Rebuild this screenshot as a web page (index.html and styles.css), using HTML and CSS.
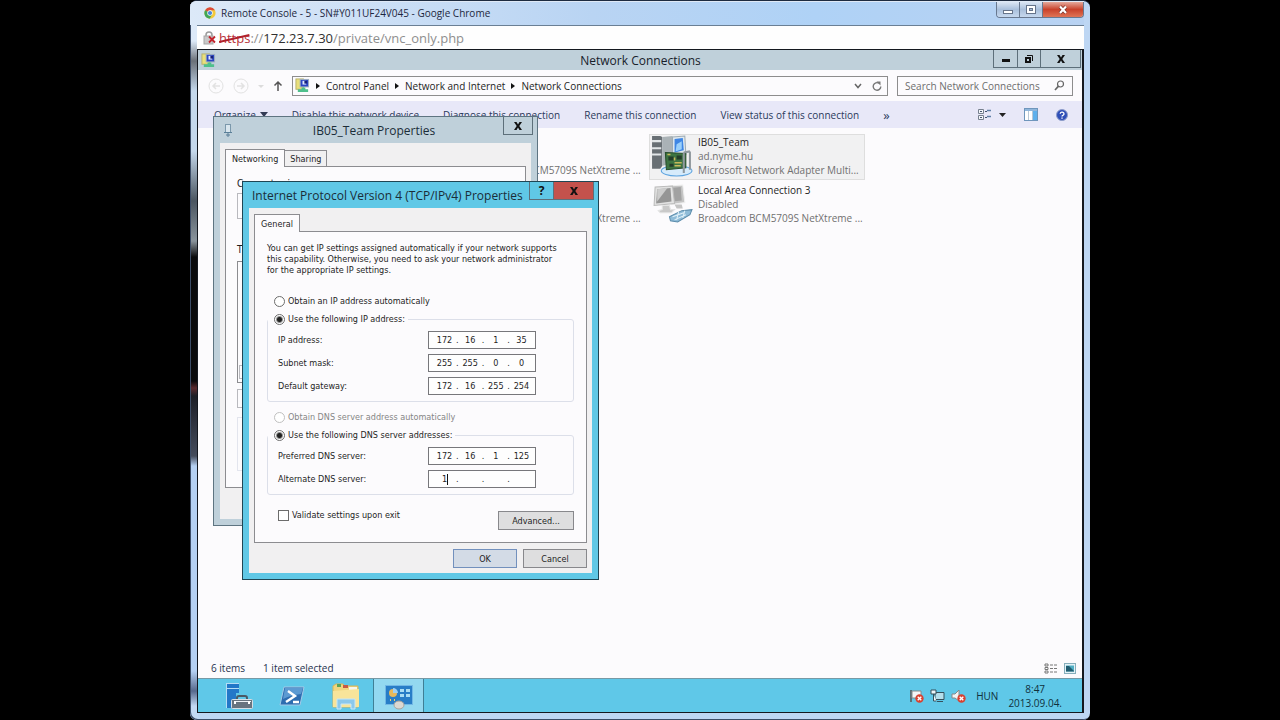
FILE: index.html
```
<!DOCTYPE html>
<html lang="en">
<head>
    <meta charset="utf-8">
    <title>Remote Console - 5</title>
    <link rel="stylesheet" href="styles.css">
</head>
<body>
    <!-- shared icons -->
    <svg class="defs" aria-hidden="true">
        <symbol id="i-net" viewBox="0 0 16 16">
            <rect x="1" y="1" width="8" height="11" fill="#e9e07a" stroke="#b7b06a"/>
            <rect x="5.500" y="1.500" width="9" height="8" fill="#2b46c4" stroke="#9fb0c0"/>
            <path d="M8 3h4v4H8z" fill="#dfe8ff"/>
            <path d="M10 3h3v3h-3z" fill="#16207a"/>
            <path d="M7 10h4v2h3v3H3v-3h4z" fill="#4fc08c"/>
        </symbol>
        <symbol id="i-x" viewBox="0 0 10 10">
            <path d="M1 1h2.500L5 3.400 6.500 1H9L6.300 5 9 9H6.500L5 6.600 3.500 9H1L3.700 5z" fill="currentColor"/>
        </symbol>
        <symbol id="i-err" viewBox="0 0 8 8">
            <circle cx="4" cy="4" r="3.700" fill="#d8402f"/>
            <path d="M2.400 2.400l3.200 3.200M5.600 2.400L2.400 5.600" stroke="#fff" stroke-width="1.200"/>
        </symbol>
    </svg>

    <div class="chrome">
        <div class="chrome-title">
            <svg class="chrome-logo" viewBox="0 0 16 16">
                <circle cx="8" cy="8" r="7.500" fill="#f3c93c"/>
                <path d="M8 8L1.500 4.200A7.500 7.500 0 0 1 14.500 4.300H8z" fill="#dc4a38"/>
                <path d="M8 8L1.500 4.200A7.500 7.500 0 0 0 7.500 15.500L11 9.600z" fill="#3fa657"/>
                <circle cx="8" cy="8" r="3.600" fill="#fff"/>
                <circle cx="8" cy="8" r="2.800" fill="#4a86d8"/>
            </svg>
            <span>Remote Console - 5 - SN#Y011UF24V045 - Google Chrome</span>
            <div class="chrome-controls">
                <button aria-label="Minimize"><svg width="12" height="12" viewBox="0 0 12 12"><rect x="1.500" y="6.500" width="9" height="3" fill="#fff" stroke="#66748a"/></svg></button>
                <button aria-label="Maximize"><svg width="12" height="12" viewBox="0 0 12 12"><rect x="1.500" y="1.500" width="9" height="8" fill="#fff" stroke="#66748a"/><rect x="4.500" y="4.500" width="3" height="2" fill="#a9bcd6" stroke="#66748a"/></svg></button>
                <button class="close" aria-label="Close"><svg width="12" height="12" viewBox="0 0 12 12"><path d="M3 2.500l6 6.500M9 2.500L3 9" stroke="#7d3328" stroke-width="3.600"/><path d="M3 2.500l6 6.500M9 2.500L3 9" stroke="#fff" stroke-width="2.200"/></svg></button>
            </div>
        </div>

        <div class="address">
            <svg width="13" height="14" viewBox="0 0 13 14">
                <path d="M3 6V4a3 3 0 0 1 6 0v2" fill="none" stroke="#9b9b9b" stroke-width="1.500"/>
                <rect x="1" y="5" width="9" height="8" fill="#c9c9c9" stroke="#a5a5a5"/>
                <path d="M6 5.500l6 6M12 5.500l-6 6" stroke="#c4242c" stroke-width="1.800"/>
            </svg>
            <span class="url"><span class="scheme">https<svg class="strike" viewBox="0 0 32 12" preserveAspectRatio="none"><path d="M0 9L31 2" stroke="#b0202a" stroke-width="1.800"/></svg></span>://<b>172.23.7.30</b>/private/vnc_only.php</span>
        </div>

        <div class="vm">
            <header class="vm-title">
                <svg class="net-icon" width="15" height="15"><use href="#i-net"/></svg>
                <h1>Network Connections</h1>
                <div class="win-controls">
                    <button aria-label="Minimize"><svg width="10" height="10" viewBox="0 0 10 10"><path d="M1 5h8v3H1z" fill="#111"/></svg></button>
                    <button aria-label="Restore"><svg width="10" height="10" viewBox="0 0 10 10"><path d="M3 1.500h5.500V7" fill="none" stroke="#111"/><rect x="2" y="4" width="4" height="4" fill="none" stroke="#111" stroke-width="2"/></svg></button>
                    <button class="wide" aria-label="Close"><svg width="10" height="10"><use href="#i-x"/></svg></button>
                </div>
            </header>

            <nav class="nav-row">
                <button class="round" aria-label="Back"><svg width="16" height="16" viewBox="0 0 16 16"><circle cx="8" cy="8" r="7" fill="none" stroke="#e2e2e2"/><path d="M12 8H5M8 5L5 8l3 3" fill="none" stroke="#e2e2e2" stroke-width="1.500"/></svg></button>
                <button class="round" aria-label="Forward"><svg width="16" height="16" viewBox="0 0 16 16"><circle cx="8" cy="8" r="7" fill="none" stroke="#e2e2e2"/><path d="M4 8h7M8 5l3 3-3 3" fill="none" stroke="#e2e2e2" stroke-width="1.500"/></svg></button>
                <svg width="6" height="4" viewBox="0 0 6 4"><path d="M0 1h6L3 4z" fill="#dcdcdc"/></svg>
                <button class="up" aria-label="Up"><svg width="10" height="12" viewBox="0 0 10 12"><path d="M5 11V2M1.500 5.500L5 2l3.500 3.500" fill="none" stroke="#555" stroke-width="1.500"/></svg></button>
                <div class="crumbs">
                    <svg width="15" height="15"><use href="#i-net"/></svg>
                    <i></i><a href="#">Control Panel</a>
                    <i></i><a href="#">Network and Internet</a>
                    <i></i><a href="#">Network Connections</a>
                    <span class="crumb-tools">
                        <svg width="8" height="6" viewBox="0 0 8 6"><path d="M1 1l3 3.500L7 1" fill="none" stroke="#666" stroke-width="1.500"/></svg>
                        <svg width="10" height="12" viewBox="0 0 10 12"><path d="M7 3.200A3.800 3.800 0 1 0 8.800 6.500" fill="none" stroke="#777" stroke-width="1.400"/><path d="M4.500 1.500h4v4z" fill="#777"/></svg>
                    </span>
                </div>
                <label class="search">
                    <input type="text" placeholder="Search Network Connections" aria-label="Search Network Connections">
                    <svg width="11" height="11" viewBox="0 0 11 11"><circle cx="6.500" cy="4" r="3" fill="none" stroke="#666" stroke-width="1.200"/><path d="M4.500 6.200L1 10" stroke="#666" stroke-width="1.700"/></svg>
                </label>
            </nav>

            <div class="toolbar">
                <button>Organize <svg width="8" height="5" viewBox="0 0 8 5"><path d="M0 0h8L4 5z" fill="#333c55"/></svg></button>
                <button>Disable this network device</button>
                <button>Diagnose this connection</button>
                <button>Rename this connection</button>
                <button>View status of this connection</button>
                <button class="more">»</button>
                <div class="view-tools">
                    <button aria-label="Change your view">
                        <svg width="15" height="13" viewBox="0 0 15 13"><path d="M1.500 1.500h5v4h-5zM1.500 7.500h5v4h-5z" fill="#f4f6fa" stroke="#76808e"/><path d="M3 3.500h2M3 9.500h2M8 3.500h2M8 9.500h2" stroke="#44566e"/><path d="M10 2.500h4M10 8.500h4" stroke="#5f7fa6" stroke-width="1.500"/></svg>
                        <svg width="7" height="4" viewBox="0 0 7 4"><path d="M0 0h7L3.500 4z" fill="#222"/></svg>
                    </button>
                    <button aria-label="Preview pane"><svg width="14" height="13" viewBox="0 0 14 13"><rect x=".5" y=".5" width="13" height="12" fill="#fff" stroke="#6f96bc"/><path d="M1 1h12v2H1z" fill="#8fb6dc"/><path d="M9 3h4v9H9z" fill="#5fb0ec"/><path d="M4.500 3v9M8.500 3v9" stroke="#b9c8d6"/></svg></button>
                    <button aria-label="Help"><svg width="12" height="12" viewBox="0 0 12 12"><circle cx="6" cy="6" r="5.500" fill="#2f4fb8" stroke="#8d9cc8"/><path d="M4.200 4.700a1.900 1.700 0 1 1 2.700 1.600q-.9.400-.9 1.200M6 8.600v1.200" fill="none" stroke="#fff" stroke-width="1.300"/></svg></button>
                </div>
            </div>

            <main class="connections">
                <div class="conn col-2"><div><strong></strong><p></p><p>Broadcom BCM5709S NetXtreme ...</p></div></div>
                <div class="conn selected">
                    <svg class="conn-icon" viewBox="0 0 42 42">
                        <path d="M2 1h8l2 1v28l-2 3H2z" fill="#686f74"/>
                        <path d="M2 6h9M2 13h9M2 19h9" stroke="#e2e6e8" stroke-width="2"/>
                        <path d="M12 2l10-1v27l-10 2z" fill="#aab2b6"/>
                        <path d="M22 2l12-1 1 18-13 1z" fill="#dfe8ee" stroke="#9eabb4"/>
                        <path d="M24 4l8-1 1 12-9 2z" fill="#3f86e4"/>
                        <path d="M26 9l5-3v8l-6 2z" fill="#9bd0fa"/>
                        <ellipse cx="26" cy="35" rx="15" ry="5" fill="#d6ebfb" stroke="#5da4e0"/>
                        <path d="M15 17l20 1v14l-19 2z" fill="#3d7442" stroke="#274d2c"/>
                        <path d="M18 21h5v4h-5zM26 20h5v4h-5zM19 28h4v3h-4z" fill="#243c2a"/>
                        <path d="M24 27h7M24 30h6M17 19h3M24 22v3" stroke="#c9b95b" stroke-width="1.500"/>
                        <path d="M33 17v20M39 16v18M33 17l6-1" fill="none" stroke="#8f989d" stroke-width="2"/>
                    </svg>
                    <div><strong>IB05_Team</strong><p>ad.nyme.hu</p><p>Microsoft Network Adapter Multi...</p></div>
                </div>
                <div class="conn col-2"><div><strong></strong><p></p><p>Broadcom BCM5709S NetXtreme ...</p></div></div>
                <div class="conn">
                    <svg class="conn-icon" viewBox="0 0 42 42">
                        <path d="M18 3l14-1 2 17-13 2z" fill="#c4c4c4" stroke="#eee"/>
                        <path d="M20 5l10-1 1 13-9 1z" fill="#a2a2a2"/>
                        <path d="M5 4l17-1 2 17-20 2z" fill="#e2e2e2" stroke="#bbb"/>
                        <path d="M7 6l13-1 1 13-15 2z" fill="#959595"/>
                        <path d="M7 6l10-1-10 13z" fill="#cdcdcd"/>
                        <path d="M12 22h7l1 4h4l-3 3H10l-2-2 4-1z" fill="#c9c9c9" stroke="#e4e4e4"/>
                        <path d="M24 21h7l1 4h-6z" fill="#c4c4c4"/>
                        <path d="M19 33l12-6 10-1-2 5-12 7-7-1z" fill="#8fbcd8" stroke="#5c8cab"/>
                        <path d="M22 33l11-4M24 36l11-5M28 28l-2 8M34 27l-2 7" stroke="#e0f0f8"/>
                    </svg>
                    <div><strong>Local Area Connection 3</strong><p>Disabled</p><p>Broadcom BCM5709S NetXtreme ...</p></div>
                </div>
            </main>

            <div class="status">
                <span>6 items</span><span>1 item selected</span>
                <div class="status-views">
                    <svg width="13" height="11" viewBox="0 0 13 11"><path d="M1 1h3v2H1zM1 4.500h3v2H1zM1 8h3v2H1z" fill="#fff" stroke="#777"/><path d="M6 2h3M10 2h3M6 5.500h3M10 5.500h3M6 9h3M10 9h3" stroke="#777"/></svg>
                    <svg width="12" height="11" viewBox="0 0 12 11"><rect x=".5" y=".5" width="11" height="10" fill="#e5f2f6" stroke="#86aebb"/><path d="M2 2.500h8v6H2z" fill="#4faec4"/><path d="M2 3h3l5 5v.500H2z" fill="#205c70"/></svg>
                </div>
            </div>

            <footer class="taskbar">
                <button aria-label="Server Manager"><svg width="30" height="30" viewBox="0 0 30 30"><path d="M3 2h13v10h-3v6H9v9H3z" fill="#2277c8"/><path d="M3 2.500h13M3.500 2v25M3 7.500h13" stroke="#b5dcf5"/><path d="M14 18v-1q0-2 2-2h6q2 0 2 2v1" fill="none" stroke="#4c5964" stroke-width="2"/><rect x="8.500" y="18.500" width="21" height="9" rx="1" fill="#68747f" stroke="#d6dfe5"/><path d="M11 20.500h17" stroke="#eef3f6"/><path d="M12 20v3M26 20v3" stroke="#fff" stroke-width="2"/></svg></button>
                <button aria-label="PowerShell"><svg width="30" height="30" viewBox="0 0 30 30"><path d="M7 6h20l-4 18H3z" fill="#2e6db0" stroke="#a4cbe8"/><path d="M8 7h18l-2 6Q14 14 6 18z" fill="#5c9ad2"/><path d="M11 10l7 5-9 6M16 21h6" fill="none" stroke="#fff" stroke-width="2.400"/></svg></button>
                <button aria-label="File Explorer"><svg width="30" height="30" viewBox="0 0 30 30"><path d="M2 5l3-2h7l2 2h13v21H2z" fill="#f1d680" stroke="#d7b65a"/><path d="M6 3h4v3H6z" fill="#5ba45a"/><path d="M12 4h5v3h-5z" fill="#c65b45"/><path d="M18 6h8v3h-8z" fill="#f8f6ec"/><path d="M2 10l26-2v18H2z" fill="#f8e49a"/><path d="M6 18h18v10h-4v-5H10v5H6z" fill="#8bc8ec" stroke="#c8e7f7"/></svg></button>
                <button class="active" aria-label="Control Panel"><svg width="30" height="30" viewBox="0 0 30 30"><rect x="1.500" y="4.500" width="27" height="19" fill="#287dc7" stroke="#72b7e5"/><circle cx="9" cy="12" r="4" fill="#e8b95a"/><path d="M9 12V7a5 5 0 0 1 5 5z" fill="#9fd0f2"/><path d="M16 8h4v3h-4zM22 8h4v3h-4zM16 13h4v3h-4zM22 13h4v3h-4z" fill="#a8dcf4"/><path d="M6 19h1M10 19h1" stroke="#f3d36b" stroke-width="2"/><ellipse cx="15" cy="24" rx="5" ry="4" fill="#dcd8d2" stroke="#a6a29b"/></svg></button>
                <div class="tray">
                    <svg width="15" height="14" viewBox="0 0 15 14"><path d="M2 1v12" stroke="#555" stroke-width="1.500"/><path d="M3 2h9v7H3z" fill="#f3f6f8" stroke="#888"/><use href="#i-err" x="6" y="5" width="9" height="9"/></svg>
                    <svg width="15" height="14" viewBox="0 0 15 14"><path d="M5 3.500h9v7H5zM7 12.500h6" fill="#b5dfec" stroke="#35505c"/><path d="M1 1h5v4H1zM3.500 5v7h3" fill="#eef7fa" stroke="#35505c"/></svg>
                    <svg width="15" height="14" viewBox="0 0 15 14"><path d="M1 5h3l4-4v11L4 9H1z" fill="#f4f4f4" stroke="#888"/><use href="#i-err" x="6" y="5" width="9" height="9"/></svg>
                    <span>HUN</span>
                    <time>8:47<br>2013.09.04.</time>
                </div>
            </footer>

            <!-- adapter properties, behind -->
            <section class="dialog team">
                <div class="dlg-title">
                    <svg width="10" height="15" viewBox="0 0 10 15"><rect x="2.500" y="1.500" width="5" height="8" fill="#d9e6ee" stroke="#7b98ab"/><path d="M1 9.500h8M5 10v4M3 12h4" stroke="#5a7f98"/></svg>
                    <h2>IB05_Team Properties</h2>
                    <div class="win-controls"><button class="mid" aria-label="Close"><svg width="10" height="10"><use href="#i-x"/></svg></button></div>
                </div>
                <div class="client">
                    <div class="tabs"><button class="tab active">Networking</button><button class="tab">Sharing</button></div>
                    <div class="panel">
                        <p>Connect using:</p>
                        <div class="box adapter"></div>
                        <p>T</p>
                        <div class="box items"><div class="scroll"></div></div>
                        <div class="box install"></div>
                        <div class="box descr"></div>
                    </div>
                </div>
            </section>

            <!-- TCP/IPv4 properties -->
            <section class="dialog ipv4">
                <div class="dlg-title">
                    <h2>Internet Protocol Version 4 (TCP/IPv4) Properties</h2>
                    <div class="win-controls"><button aria-label="Help"><span class="q">?</span></button><button class="wide red" aria-label="Close"><svg width="10" height="10"><use href="#i-x"/></svg></button></div>
                </div>
                <form class="client">
                    <div class="tabs"><button type="button" class="tab active">General</button></div>
                    <div class="panel">
                        <p class="intro">You can get IP settings assigned automatically if your network supports this capability. Otherwise, you need to ask your network administrator for the appropriate IP settings.</p>

                        <label class="opt"><input type="radio" name="ip"> Obtain an IP address automatically</label>
                        <fieldset>
                            <legend><label class="opt"><input type="radio" name="ip" checked> Use the following IP address:</label></legend>
                            <div class="row"><label for="ip1">IP address:</label><span class="ip"><input id="ip1" value="172">.<input aria-label="IP octet 2" value="16">.<input aria-label="IP octet 3" value="1">.<input aria-label="IP octet 4" value="35"></span></div>
                            <div class="row"><label for="sm1">Subnet mask:</label><span class="ip"><input id="sm1" value="255">.<input aria-label="Mask octet 2" value="255">.<input aria-label="Mask octet 3" value="0">.<input aria-label="Mask octet 4" value="0"></span></div>
                            <div class="row"><label for="gw1">Default gateway:</label><span class="ip"><input id="gw1" value="172">.<input aria-label="Gateway octet 2" value="16">.<input aria-label="Gateway octet 3" value="255">.<input aria-label="Gateway octet 4" value="254"></span></div>
                        </fieldset>

                        <label class="opt off"><input type="radio" name="dns" disabled> Obtain DNS server address automatically</label>
                        <fieldset>
                            <legend><label class="opt"><input type="radio" name="dns" checked> Use the following DNS server addresses:</label></legend>
                            <div class="row"><label for="pd1">Preferred DNS server:</label><span class="ip"><input id="pd1" value="172">.<input aria-label="Preferred octet 2" value="16">.<input aria-label="Preferred octet 3" value="1">.<input aria-label="Preferred octet 4" value="125"></span></div>
                            <div class="row"><label for="ad1">Alternate DNS server:</label><span class="ip typing"><input id="ad1" value="1">.<input aria-label="Alternate octet 2">.<input aria-label="Alternate octet 3">.<input aria-label="Alternate octet 4"></span></div>
                        </fieldset>

                        <div class="bottom">
                            <label class="opt"><input type="checkbox"> Validate settings upon exit</label>
                            <button type="button" class="btn adv">Advanced...</button>
                        </div>
                    </div>
                    <div class="actions">
                        <button type="button" class="btn ok">OK</button>
                        <button type="button" class="btn">Cancel</button>
                    </div>
                </form>
            </section>
        </div>
    </div>
</body>
</html>
```
FILE: styles.css
```
* { box-sizing: border-box; }
body { margin: 0; background: #000; font-family: "Open Sans", "Noto Sans", sans-serif; font-size: 10px; color: #1e1e1e; }
h1, h2, p { margin: 0; font-weight: normal; }
button { font: inherit; color: inherit; background: none; border: 0; padding: 0; margin: 0; display: flex; align-items: center; justify-content: center; }
svg { flex: none; }
.defs { position: absolute; width: 0; height: 0; }

/* outer browser window */
.chrome { display: flex; flex-direction: column; max-width: 900px; height: 100vh; min-height: 640px; margin: 0 auto; padding: 0 6px 0 7px; border-top: 1px solid #1d2b40; border-radius: 7px; background: linear-gradient(#dce9f8 0, #dce9f8 40px, #6a7078 60px, #c5d8ec 90px, #c5d8ec 150px, #4a5560 200px, #8a949c 240px, #0a0a0c 256px, #0a0a0c 380px, #5a2a2e 387px, #1c1e26 395px, #454c5c 455px, #b5d0f2 465px, #b5d0f2 670px, #56688c 690px, #c3d9f3 705px, #c3d9f3 100%) left / 8px 100% no-repeat, #bdd6f3; box-shadow: inset 1px -1px #3c4c66; }
.chrome-title { display: flex; align-items: center; height: 24px; margin: 0 0 0 -7px; padding: 0 0 2px 14px; gap: 5px; border-top: 1px solid #dfe9f6; background: linear-gradient(90deg, #dce9f8, #b9d4f3 45%, #afd2f6 70%, #b8d2f2); border-radius: 6px 0 0; color: #1d2740; }
.chrome-logo { width: 12px; height: 12px; }
.chrome-controls { display: flex; align-self: flex-start; margin-left: auto; height: 16px; border: 1px solid #68788f; border-top: 0; border-radius: 0 0 4px 4px; overflow: hidden; }
.chrome-controls button { width: 23px; border-right: 1px solid #68788f; background: linear-gradient(#dbe6f4, #a9bfdb 50%, #c6d8ee); }
.chrome-controls .close { width: 40px; border: 0; background: linear-gradient(#e5a99b, #c9422b 50%, #e07455); }
.address { display: flex; align-items: center; gap: 3px; height: 24px; padding-left: 6px; background: #fefefe; border-top: 1px solid #6a7f94; }
.url { font-size: 13px; color: #8e8e8e; }
.url b { font-weight: normal; color: #303030; }
.scheme { position: relative; color: #b8323a; }
.strike { position: absolute; left: 0; top: 4px; width: 100%; height: 12px; }

/* remote desktop */
.vm { position: relative; flex: 1; display: flex; flex-direction: column; margin-bottom: 7px; border: 1px solid #14181f; border-right-width: 2px; background: #fcfbfd; }
.vm-title { display: flex; align-items: center; height: 20px; padding: 0 1px 0 3px; background: #bfd0da; color: #17202a; }
.vm-title h1 { flex: 1; padding-left: 72px; text-align: center; font-size: 12px; }
.win-controls { display: flex; align-self: flex-start; border: 1px solid #5d6f7a; border-top: 0; color: #111; }
.win-controls button { width: 23px; height: 17px; }
.win-controls button + button { border-left: 1px solid #5d6f7a; }
.win-controls .mid { width: 28px; }
.win-controls .wide { width: 40px; }
.win-controls .red { background: #c4524c; }
.q { font-weight: bold; font-size: 12px; }

.nav-row { display: flex; align-items: center; gap: 9px; height: 31px; padding: 0 9px 0 10px; }
.round { width: 16px; height: 16px; }
.up { width: 10px; height: 16px; }
.crumbs { flex: 1; display: flex; align-items: center; gap: 6px; height: 20px; padding: 0 5px 0 2px; border: 1px solid #8d8d8d; }
.crumbs a { color: #1e1e1e; text-decoration: none; }
.crumbs i { border: 3px solid transparent; border-left: 4px solid #111; border-right: 0; }
.crumb-tools { display: flex; align-items: center; gap: 10px; margin-left: auto; }
.search { display: flex; align-items: center; width: 176px; height: 20px; padding: 0 7px; border: 1px solid #8d8d8d; }
.search input { flex: 1; min-width: 0; border: 0; padding: 0; background: none; font: inherit; }
.search input::placeholder { color: #6d6d6d; opacity: 1; }

.toolbar { display: flex; align-items: center; gap: 24px; height: 27px; padding: 0 14px 0 16px; background: #e8e8f8; color: #2b3a5c; }
.toolbar button { gap: 4px; white-space: nowrap; }
.toolbar .more { font-size: 13px; }
.view-tools { display: flex; gap: 18px; margin-left: auto; }
.view-tools button:first-child { gap: 7px; }

.connections { flex: 1; display: grid; grid-template-columns: repeat(3, 216px); grid-auto-rows: 46px; gap: 2px 3px; align-content: start; padding: 6px 0 0 13px; }
.conn { display: flex; gap: 5px; grid-column: 3; border: 1px solid transparent; line-height: 14px; color: #707070; white-space: nowrap; }
.conn.col-2 { grid-column: 2; padding-left: 45px; }
.conn.selected { background: #f1f1f2; border-color: #dedede; }
.conn-icon { width: 43px; height: 43px; }
.conn strong { display: block; font-weight: normal; color: #1e1e1e; }
.conn strong, .conn p { height: 14px; }

.status { display: flex; align-items: center; gap: 18px; height: 22px; padding: 2px 6px 0 13px; color: #26324e; }
.status-views { display: flex; gap: 7px; margin-left: auto; }

.taskbar { display: flex; height: 34px; background: #5fc8e8; border-top: 1px solid #7799a5; color: #10303c; }
.taskbar button { width: 53px; margin-left: 1px; }
.taskbar button:first-child { margin-left: 13px; }
.taskbar .active { width: 51px; background: #93d8f0; border: 1px solid #3f7f96; border-width: 0 1px; }
.tray { display: flex; align-items: center; gap: 6px; margin-left: auto; padding-right: 20px; }
.tray span { margin: 0 4px; }
.tray time { text-align: center; line-height: 14px; }

/* dialogs */
.dialog { position: absolute; display: flex; flex-direction: column; font-family: "DejaVu Sans Condensed", "DejaVu Sans", sans-serif; font-size: 9px; }
.team { left: 15px; top: 66px; width: 325px; height: 410px; padding: 0 6px 6px; background: #bfd0da; border: 1px solid #5e7481; }
.ipv4 { left: 44px; top: 131px; width: 357px; height: 399px; padding: 0 6px 6px; background: #60c8e6; border: 1px solid #1f4654; }
.dlg-title { display: flex; align-items: center; height: 26px; font-family: "Open Sans", "Noto Sans", sans-serif; }
.dlg-title h2 { flex: 1; text-align: center; font-size: 12px; white-space: nowrap; color: #1b2d38; }
.team .dlg-title h2 { padding-left: 12px; }
.team .dlg-title svg { margin-left: 3px; }
.team .win-controls svg { margin: 0; }
.dlg-title .win-controls { margin-right: -2px; }
.ipv4 .dlg-title h2 { padding-left: 3px; text-align: left; }
.client { flex: 1; display: flex; flex-direction: column; padding: 5px; background: #f1f0f1; }
.tabs { display: flex; align-items: flex-end; height: 18px; }
.tab { height: 16px; padding: 0 5px; background: #f1f0f1; border: 1px solid #8c8c90; border-left: 0; border-bottom: 0; }
.tab.active { position: relative; height: 18px; margin-bottom: -1px; padding: 0 6px; border-left: 1px solid #8c8c90; background: #fcfbfd; }
.panel { flex: 1; border: 1px solid #8c8c90; background: #fcfbfd; }
.team .client { padding-bottom: 31px; }
.team .panel { padding: 11px; }
.team p { height: 11px; line-height: 11px; font-size: 10px; }
.box { border: 1px solid #b9b9be; }
.adapter { height: 26px; margin: 4px 0 25px; }
.items { height: 122px; margin: 6px 0; padding: 103px 0 0 1px; border-color: #8c8c90; }
.scroll { height: 14px; border: 1px solid #b9b9be; }
.install { height: 19px; width: 80px; }
.descr { height: 54px; margin-top: 9px; border-color: #e3e5ee; }

.ipv4 .panel { padding: 11px 12px; }
.intro { line-height: 11px; margin-bottom: 18px; padding-right: 10px; }
.opt { display: flex; align-items: center; gap: 3px; height: 14px; padding-left: 7px; }
.opt input { appearance: none; width: 11px; height: 11px; margin: 0; border: 1px solid #6c6c6c; background: #fff; }
.opt input[type="radio"] { border-radius: 50%; }
.opt input[type="radio"]:checked { background: radial-gradient(circle, #222 2px, #fff 4px); }
.opt.off { color: #868686; }
.opt.off input { border-color: #c0c0c0; }
fieldset { margin: 4px 0 8px; padding: 0 0 6px; min-width: 0; border: 1px solid #dcdfe9; border-radius: 3px; }
legend { padding: 0 3px 0 0; margin: 0; }
legend .opt { padding-left: 6px; }
.row { display: flex; align-items: center; justify-content: space-between; height: 18px; margin-top: 5px; padding: 0 37px 0 10px; }
.ip { position: relative; display: flex; align-items: center; width: 108px; height: 18px; padding: 0 2px 0 4px; border: 1px solid #77777b; background: #fefefe; }
.ip input { flex: 1; width: 0; border: 0; padding: 0; background: none; text-align: center; font: inherit; color: inherit; }
.typing::after { content: ""; position: absolute; left: 18px; top: 3px; width: 1px; height: 11px; background: #111; }
.bottom { display: flex; justify-content: space-between; padding-top: 5px; }
.bottom .opt { padding-left: 11px; }
.btn { height: 19px; min-width: 64px; border: 1px solid #88888c; background: #dededf; }
.adv { min-width: 76px; margin-top: 3px; }
.actions { display: flex; justify-content: flex-end; gap: 6px; padding-top: 6px; }
.btn.ok { border-color: #7290bd; background: #d3dbe6; }
```
